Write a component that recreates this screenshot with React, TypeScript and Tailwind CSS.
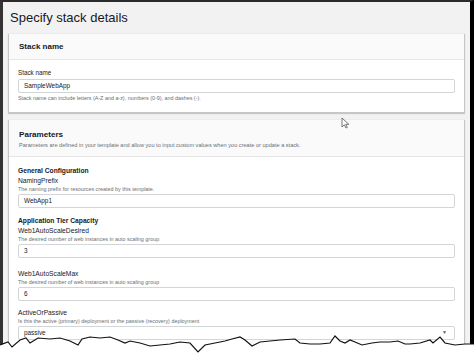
import React from "react";

const font = { fontFamily: '"Liberation Sans", Arial, sans-serif' };

function Field({ label, hint, value, select }: { label: string; hint?: string; value: string; select?: boolean }) {
  return (
    <div>
      <div className="text-[6.7px] leading-[9px] text-[#16191f]">{label}</div>
      {hint && <div className="text-[5.4px] leading-[8px] text-[#687078]">{hint}</div>}
      <div className="mt-px flex h-[14px] items-center justify-between rounded-[2px] border border-[#d3d6d8] bg-white pl-[5px] pr-[7px] text-[6.4px] text-[#16191f]">
        <span>{value}</span>
        {select && <span className="text-[5px] text-[#545b64]">▼</span>}
      </div>
    </div>
  );
}

const torn =
  "0,345 8,342 12,347 20,340 26,338 30,343 38,338 50,339 60,338 70,341 78,345 82,339 90,337 100,338 110,337 118,340 125,343 130,341 140,343 150,346 160,345 170,344 180,342 190,343 198,352 205,345 215,343 225,341 232,339 240,337 245,340 252,346 260,342 280,340 295,339 300,343 310,344 320,344 330,343 335,336 340,341 345,343 350,340 355,342 362,345 372,343 380,342 390,342 398,341 405,344 410,344 420,343 430,340 433,343 440,337 445,343 455,345 465,344 474,344";

export default function App() {
  return (
    <div className="relative h-[353px] w-[474px] overflow-hidden bg-white" style={font}>
      <div className="h-full border-t-2 border-l-[3px] border-r-4 border-t-[#2b2b2b] border-l-[#333] border-r-black bg-[#f2f2f2]">
        <div className="flex h-[32px] items-center pl-[7px] text-[13px] text-[#16191f]">Specify stack details</div>
        <div className="px-[6px]">
          <div className="bg-white shadow-[0_1px_1px_1px_rgba(0,0,0,0.18)]">
            <div className="flex h-[26px] items-center border-b border-[#e6e6e6] bg-[#fafafa] px-[10px] text-[8px] font-bold text-[#16191f]">
              Stack name
            </div>
            <div className="px-[9px] pt-[7px] pb-[9px]">
              <div className="text-[6.3px] leading-[11px] text-[#16191f]">Stack name</div>
              <div className="mt-px flex h-[14px] items-center rounded-[2px] border border-[#d3d6d8] pl-[5px] text-[6.4px] text-[#16191f]">
                SampleWebApp
              </div>
              <div className="mt-px text-[5.4px] leading-[9px] text-[#687078]">
                Stack name can include letters (A-Z and a-z), numbers (0-9), and dashes (-).
              </div>
            </div>
          </div>
          <div className="mt-[8px] bg-white shadow-[0_1px_1px_1px_rgba(0,0,0,0.18)]">
            <div className="h-[37px] border-b border-[#e6e6e6] bg-[#fafafa] px-[10px] pt-[9px]">
              <div className="text-[8.1px] font-bold leading-[12px] text-[#16191f]">Parameters</div>
              <div className="text-[5.6px] leading-[8px] text-[#687078]">
                Parameters are defined in your template and allow you to input custom values when you create or update a stack.
              </div>
            </div>
            <div className="px-[9px] pt-[9px] pb-4">
              <div className="text-[6.7px] font-bold leading-[10px] text-[#16191f]">General Configuration</div>
              <Field label="NamingPrefix" hint="The naming prefix for resources created by this template." value="WebApp1" />
              <div className="mt-[8px] text-[6.7px] font-bold leading-[10px] text-[#16191f]">Application Tier Capacity</div>
              <Field label="Web1AutoScaleDesired" hint="The desired number of web instances in auto scaling group" value="3" />
              <div className="mt-[11px]">
                <Field label="Web1AutoScaleMax" hint="The desired number of web instances in auto scaling group" value="6" />
              </div>
              <div className="mt-[7px]">
                <Field
                  label="ActiveOrPassive"
                  hint="Is this the active (primary) deployment or the passive (recovery) deployment"
                  value="passive"
                  select
                />
              </div>
            </div>
          </div>
        </div>
      </div>
      <svg className="absolute left-[341px] top-[117px]" width="9" height="12" viewBox="0 0 9 12">
        <path d="M1 1 L1 10 L3.3 7.8 L5 11 L6.3 10.4 L4.7 7.3 L7.8 7.3 Z" fill="white" stroke="#555" strokeWidth="0.8" />
      </svg>
      <svg className="absolute left-0 top-0" width="474" height="353" viewBox="0 0 474 353">
        <polygon points={`${torn} 474,353 0,353`} fill="white" />
        <polyline points={torn} fill="none" stroke="#111" strokeWidth="1.2" />
      </svg>
    </div>
  );
}
